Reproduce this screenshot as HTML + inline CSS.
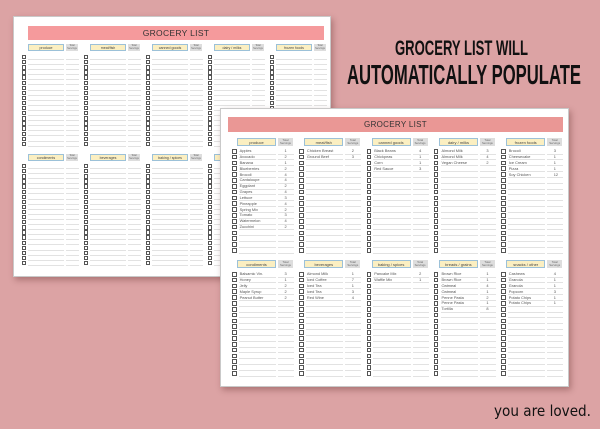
<!DOCTYPE html>
<html><head><meta charset="utf-8">
<style>
*{margin:0;padding:0;box-sizing:border-box}
body{width:600px;height:429px;background:#dca3a4;position:relative;overflow:hidden;font-family:"Liberation Sans",sans-serif}
.sheet{position:absolute;background:#fff;border:1px solid #c9c9c9;box-shadow:2px 3px 6px rgba(80,30,30,.35)}
.a{position:absolute}
.bar{position:absolute;display:flex;align-items:center;justify-content:center;color:#333;letter-spacing:.3px}
.lab{position:absolute;background:#fbefc1;border:1px solid #9cc1d8;color:#444;display:flex;align-items:center;justify-content:center;white-space:nowrap}
.srv{position:absolute;background:#ddd;color:#666;display:flex;align-items:center;justify-content:center;text-align:center;line-height:1}
.cb{position:absolute;border:1px solid #555;background:#fff}
.ln{position:absolute;height:1px;background:#e2e2e2}
.t{position:absolute;color:#555;white-space:nowrap;line-height:1}
.fit{position:absolute;white-space:nowrap;transform-origin:left top;line-height:1;display:inline-block}
h1.fit{font-family:"Liberation Sans",sans-serif;font-weight:bold;color:#111}
</style></head><body>
<div class="sheet" id="back" style="left:13px;top:16px;width:318px;height:261px"></div>
<div class="sheet" id="front" style="left:220px;top:108px;width:349px;height:279px"></div>
<h1 class="fit" data-w="133" style="left:395px;top:38px;font-size:21px">GROCERY LIST WILL</h1>
<h1 class="fit" data-w="234" style="left:347px;top:61px;font-size:28px">AUTOMATICALLY POPULATE</h1>
<div class="fit" data-w="97" style="left:494px;top:404px;font-family:'DejaVu Sans',sans-serif;font-size:15px;color:#111">you are loved.</div>
<script>
document.querySelectorAll('.fit').forEach(function(e){var w=e.getBoundingClientRect().width;e.style.transform='scaleX('+(+e.dataset.w/w)+')';});
function build(id,o){
 var s=document.getElementById(id),h='';
 var L=s.offsetLeft,T=s.offsetTop;
 function add(x){h+=x;}
 add('<div class="bar" style="left:'+(o.barX-L)+'px;top:'+(o.barY-T)+'px;width:'+o.barW+'px;height:'+o.barH+'px;background:'+o.barC+';font-size:'+o.barF+'px">GROCERY LIST</div>');
 o.sections.forEach(function(sec){
  sec.cols.forEach(function(col,i){
   var c=o.cx+i*o.cp-L;
   add('<div class="lab" style="left:'+(c+o.lx)+'px;top:'+(sec.hy-T)+'px;width:'+o.lw+'px;height:'+o.lh+'px;font-size:'+o.lf+'px">'+col.name+'</div>');
   add('<div class="srv" style="left:'+(c+o.sx)+'px;top:'+(sec.hy-T)+'px;width:'+o.sw+'px;height:'+o.lh+'px;font-size:'+(o.lf*0.7)+'px">Total<br>Servings</div>');
   for(var r=0;r<sec.n;r++){
    var y=sec.ry+r*o.rp-T;
    add('<div class="cb" style="left:'+c+'px;top:'+y+'px;width:'+o.cs+'px;height:'+o.cs+'px"></div>');
    add('<div class="ln" style="left:'+(c+o.cs+2)+'px;top:'+(y+o.rp-1.2)+'px;width:'+(o.lx+o.lw-o.cs-2)+'px"></div>');
    add('<div class="ln" style="left:'+(c+o.sx)+'px;top:'+(y+o.rp-1.2)+'px;width:'+(o.sw+1)+'px"></div>');
    var it=col.items&&col.items[r];
    if(it){add('<div class="t" style="left:'+(c+o.cs+3)+'px;top:'+(y+0.3)+'px;font-size:'+o.tf+'px">'+it[0]+'</div>');
     add('<div class="t" style="left:'+(c+o.sx+o.sw/2-1)+'px;top:'+(y+0.3)+'px;font-size:'+o.tf+'px">'+it[1]+'</div>');}
   }
  });
 });
 s.innerHTML=h;
}
function P(a){return a.split(',').map(function(x){var m=x.trim().match(/^(.*) (\d+)$/);return [m[1],m[2]];});}
build('back',{barX:27,barY:25,barW:296,barH:14,barC:'#f59a9c',barF:8.5,cx:21,cp:62,lx:6,lw:36,lh:7,lf:3.6,sx:44,sw:12,cs:4.4,rp:5.1,tf:3.5,
 sections:[{hy:43,ry:54,n:18,cols:[{name:'produce'},{name:'meat/fish'},{name:'canned goods'},{name:'dairy / milks'},{name:'frozen foods'}]},
 {hy:153,ry:163,n:20,cols:[{name:'condiments'},{name:'beverages'},{name:'baking / spices'},{name:'breads'},{name:'snacks'}]}]});
build('front',{barX:227,barY:116,barW:335,barH:15,barC:'#ea9795',barF:8,cx:231,cp:67.3,lx:5,lw:39,lh:8,lf:4,sx:46,sw:15,cs:4.6,rp:5.83,tf:3.9,
 sections:[{hy:137,ry:148,n:18,cols:[
  {name:'produce',items:P('Apples 1,Avocado 2,Banana 1,Blueberries 2,Brocoli 4,Cantaloupe 4,Eggplant 2,Grapes 4,Lettuce 3,Pineapple 4,Spring Mix 2,Tomato 3,Watermelon 4,Zucchini 2')},
  {name:'meat/fish',items:P('Chicken Breast 2,Ground Beef 3')},
  {name:'canned goods',items:P('Black Beans 4,Chickpeas 1,Corn 1,Red Sauce 3')},
  {name:'dairy / milks',items:P('Almond Milk 3,Almond Milk 4,Vegan Cheese 2')},
  {name:'frozen foods',items:P('Brocoli 3,Cheesecake 1,Ice Cream 1,Pizza 1,Soy Chicken 12')}]},
 {hy:259,ry:271,n:18,cols:[
  {name:'condiments',items:P('Balsamic Vin. 3,Honey 1,Jelly 2,Maple Syrup 2,Peanut Butter 2')},
  {name:'beverages',items:P('Almond Milk 1,Iced Coffee 7,Iced Tea 1,Iced Tea 3,Red Wine 4')},
  {name:'baking / spices',items:P('Pancake Mix 2,Waffle Mix 1')},
  {name:'breads / grains',items:P('Brown Rice 1,Brown Rice 1,Oatmeal 4,Oatmeal 1,Penne Pasta 2,Penne Pasta 1,Tortilla 8')},
  {name:'snacks / other',items:P('Cashews 4,Granola 1,Granola 1,Popcorn 3,Potato Chips 1,Potato Chips 1')}]}]});
</script>
</body></html>
